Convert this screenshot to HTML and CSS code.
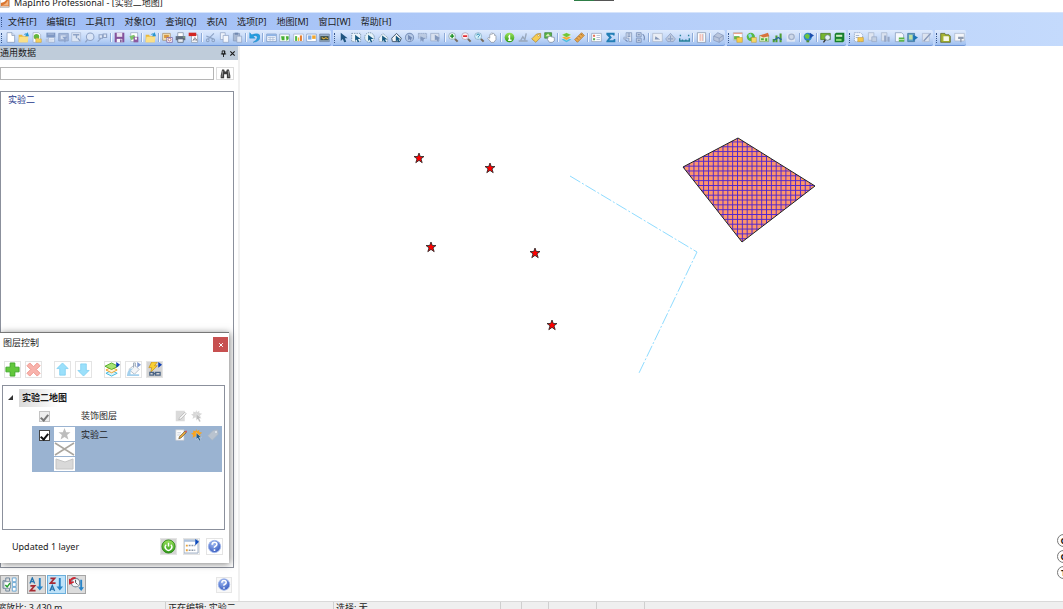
FILE: index.html
```html
<!DOCTYPE html>
<html lang="zh-CN">
<head>
    <meta charset="UTF-8">
    <meta name="viewport" content="width=device-width, initial-scale=1.0">
    <title>MapInfo Professional - [实验二地图]</title>
    <link rel="stylesheet" href="styles.css">
</head>
<body>

<!-- icon sprite -->
<svg class="sprite" aria-hidden="true">
    <defs>
        <linearGradient id="gGreen" x1="0" y1="0" x2="0" y2="1"><stop offset="0" stop-color="#9be25c"/><stop offset="1" stop-color="#2c9a17"/></linearGradient>
        <radialGradient id="gBlue" cx=".4" cy=".3" r=".8"><stop offset="0" stop-color="#9fb9f2"/><stop offset="1" stop-color="#2b50b8"/></radialGradient>
    </defs>
    <symbol id="i-page" viewBox="0 0 16 16"><path d="M3 1h7l4 4v10H3z" fill="#fff" stroke="#7d92b5"/><path d="M10 1v4h4" fill="#dde6f4" stroke="#7d92b5"/></symbol>
    <symbol id="i-folder" viewBox="0 0 16 16"><path d="M1 4h5l1 2h7v9H1z" fill="#e9b93c"/><path d="M1 15l1-8h13l-1 8z" fill="#fbe087"/><path d="M8 5q2-4 5-3l1-2 2 6h-6l2-2q-2-1-4 1" fill="#2795d0"/></symbol>
    <symbol id="i-copygreen" viewBox="0 0 16 16"><path d="M3 1h8l3 3v11H3z" fill="#fff" stroke="#9aa9c0"/><circle cx="8" cy="7" r="4" fill="#64b63c"/><path d="M7 9h3l1 1h4v5H7z" fill="#f4d25f" stroke="#c9a033" stroke-width=".7"/></symbol>
    <symbol id="i-dimsave" viewBox="0 0 16 16"><path d="M2 1h13v7H2z" fill="#7f98c4"/><path d="M5 8h9v7H5z" fill="#e1e8f3" stroke="#93a7ca"/><path d="M4 3h9M7 11h6M7 13h4" stroke="#c7d3e8"/><path d="M1 10h5v5H1z" fill="#b3c1da"/></symbol>
    <symbol id="i-dimtable" viewBox="0 0 16 16"><path d="M1 2h14v11H1z" fill="#a3b5d6" stroke="#7f97c2"/><path d="M4 5h7v5H4z" fill="#d5dfef"/><path d="M6 7h8l-3 3v5H9v-5z" fill="#8ba2cb"/></symbol>
    <symbol id="i-dimtext" viewBox="0 0 16 16"><path d="M1 1h13v13H1z" fill="#dbe4f3" stroke="#a3b5d3"/><path d="M3 4h9M8 5v4M10 9l3 4" stroke="#8da2c6" stroke-width="2"/></symbol>
    <symbol id="i-dimzoom" viewBox="0 0 16 16"><circle cx="9" cy="7" r="5.5" fill="#d9e4f6" stroke="#8ea2c5" stroke-width="1.5"/><path d="M5 11l-3 4" stroke="#8ea2c5" stroke-width="2"/></symbol>
    <symbol id="i-dimwand" viewBox="0 0 16 16"><path d="M1 14l5-5M3 4h5v5H3zM9 3h5v5H9z" stroke="#8ea2c5" stroke-width="1.6" fill="#dde6f5"/></symbol>
    <symbol id="i-save" viewBox="0 0 16 16"><path d="M1 1h14v14H1z" fill="#84529b"/><path d="M4 1h8v6H4z" fill="#e9e3f1"/><path d="M4 10h8v5H4z" fill="#f7f3fa"/><path d="M9 11h2v4H9z" fill="#684080"/></symbol>
    <symbol id="i-savecopy" viewBox="0 0 16 16"><path d="M4 1h10v13H4z" fill="#fff" stroke="#8fa2bd"/><path d="M2 6l7-2 2 4-6 4z" fill="#7fc46c"/><path d="M8 7h7v8H8z" fill="#8c5aa0"/><path d="M10 8h3v3h-3z" fill="#fff"/></symbol>
    <symbol id="i-printpage" viewBox="0 0 16 16"><path d="M1 2h11v10H1z" fill="#f8eac3" stroke="#9b8562"/><path d="M3 4h7v5H3z" fill="#d89741"/><path d="M7 8h8v7H7z" fill="#fff" stroke="#75559a"/><circle cx="11" cy="11" r="2" fill="none" stroke="#a34c4c"/></symbol>
    <symbol id="i-print" viewBox="0 0 16 16"><path d="M4 1h8v6H4z" fill="#fff" stroke="#76859d"/><path d="M1 6h14v6H1z" fill="#626e80"/><path d="M4 10h8v5H4z" fill="#e9edf4" stroke="#4b5665"/><path d="M12 7h2v1h-2z" fill="#9ee571"/></symbol>
    <symbol id="i-pdf" viewBox="0 0 16 16"><path d="M5 4h9v11H5z" fill="#fff" stroke="#8391a5"/><path d="M1 1h11v5H1z" fill="#d22621"/><path d="M7 13l3-5 3 4-5-1" fill="none" stroke="#5d5d6d"/></symbol>
    <symbol id="i-cut" viewBox="0 0 16 16"><path d="M13 2L5 10M2 6l10 4" stroke="#8da3c5" stroke-width="1.6"/><circle cx="4" cy="12" r="2" fill="none" stroke="#8da3c5" stroke-width="1.5"/><circle cx="12" cy="12" r="2" fill="none" stroke="#8da3c5" stroke-width="1.5"/></symbol>
    <symbol id="i-copy" viewBox="0 0 16 16"><path d="M2 1h7v10H2z" fill="#eef3fb" stroke="#8c9fc0"/><path d="M6 5h8v10H6z" fill="#f3f6fc" stroke="#8c9fc0"/></symbol>
    <symbol id="i-paste" viewBox="0 0 16 16"><path d="M2 2h9v11H2z" fill="#a8b8d2" stroke="#7f94b8"/><path d="M4 1h5v3H4z" fill="#7189b1"/><path d="M7 6h7v9H7z" fill="#dfe7f4" stroke="#8c9fc0"/></symbol>
    <symbol id="i-undo" viewBox="0 0 16 16"><path d="M1 1v8h8L6 6q6-2 6 2t-6 7q10-1 10-8T4 4z" fill="#269ee0" stroke="#1681c4" stroke-width=".6"/></symbol>
    <symbol id="i-win" viewBox="0 0 16 16"><path d="M1 3h14v11H1z" fill="#eef4fc" stroke="#6f8eb9"/><path d="M1 3h14v3H1z" fill="#8fb3e4"/><path d="M3 8h10M3 11h10M6 7v6M10 7v6" stroke="#a6b8d3"/></symbol>
    <symbol id="i-wingreen" viewBox="0 0 16 16"><path d="M1 3h14v11H1z" fill="#f6fbf6" stroke="#809abb"/><path d="M3 6h5v6H4zM10 6h4v4l-3 3z" fill="#46b034"/></symbol>
    <symbol id="i-winbar" viewBox="0 0 16 16"><path d="M1 3h14v11H1z" fill="#fff" stroke="#9cabc4"/><path d="M3 6h3v7H3z" fill="#51b749"/><path d="M7 8h2v5H7z" fill="#f2c12e"/><path d="M10 5h3v8h-3z" fill="#e27c30"/></symbol>
    <symbol id="i-winlay" viewBox="0 0 16 16"><path d="M1 3h14v11H1z" fill="#fff" stroke="#7795c0"/><path d="M3 5h5v6H3z" fill="#81ace3"/><path d="M9 5h5v5H9z" fill="#f0a62e"/></symbol>
    <symbol id="i-windark" viewBox="0 0 16 16"><path d="M1 3h14v11H1z" fill="#9bb0c8" stroke="#6a7e9c"/><path d="M2 6h12v6H2z" fill="#3a4c45"/><path d="M4 8l3 2 3-2 3 2" stroke="#e0ae3b" stroke-width="1.5" fill="none"/></symbol>
    <symbol id="i-arrow" viewBox="0 0 16 16"><path d="M4 1v12l3-3 2 5 3-1-2-5h4z" fill="#21557f"/></symbol>
    <symbol id="i-marquee" viewBox="0 0 16 16"><path d="M1 2h13v12H1z" fill="#eaf3fa" stroke="#5d7b95" stroke-dasharray="2 1.5"/><path d="M6 4v9l2-2 2 4 2-1-2-4h4z" fill="#17587f"/></symbol>
    <symbol id="i-radius" viewBox="0 0 16 16"><circle cx="8" cy="8" r="7" fill="#e6f3f8" stroke="#547692" stroke-dasharray="2 1.3"/><path d="M6 4v9l2-2 2 4 2-1-2-4h4z" fill="#17587f"/></symbol>
    <symbol id="i-poly" viewBox="0 0 16 16"><path d="M1 9l6-7 7 6v6H2z" fill="#e9f3f8" stroke="#738ba2" stroke-dasharray="2 1"/><path d="M6 5v9l2-2 2 3 2-1-2-3h4z" fill="#17587f"/></symbol>
    <symbol id="i-bound" viewBox="0 0 16 16"><path d="M1 9l7-7 7 7-2 5H2z" fill="#f2f4f5" stroke="#44576d" stroke-width="1.4"/><path d="M7 5v9l2-2 2 3 2-1-2-3h3z" fill="#17587f"/></symbol>
    <symbol id="i-dimcirc" viewBox="0 0 16 16"><circle cx="8" cy="8" r="6" fill="#b8cbe7" stroke="#7f97bf" stroke-width="1.5"/><path d="M6 4v8l2-2 2 3 1-4h2z" fill="#7189b4"/></symbol>
    <symbol id="i-dimsel" viewBox="0 0 16 16"><path d="M2 2h12v7H2z" fill="#bccbe2" stroke="#8197bb" stroke-dasharray="2 1"/><path d="M5 6v8l2-2 2 3 1-5h3z" fill="#8298bd"/></symbol>
    <symbol id="i-dimpick" viewBox="0 0 16 16"><path d="M1 2h12v11H1z" fill="#d8e0ee" stroke="#96a7c4"/><path d="M7 4v8l2-1 3 4 1-6h2z" fill="#8298bd"/></symbol>
    <symbol id="i-zoomin" viewBox="0 0 16 16"><path d="M10 10l4 4" stroke="#776c5e" stroke-width="3"/><circle cx="6" cy="6" r="5" fill="#ebf8f0" stroke="#849bb0"/><path d="M3 6h6M6 3v6" stroke="#148b1c" stroke-width="2"/></symbol>
    <symbol id="i-zoomout" viewBox="0 0 16 16"><path d="M10 10l4 4" stroke="#776c5e" stroke-width="3"/><circle cx="6" cy="6" r="5" fill="#fbf0f2" stroke="#9d9bb0"/><path d="M3 6h6" stroke="#df2029" stroke-width="2.4"/></symbol>
    <symbol id="i-zoomq" viewBox="0 0 16 16"><path d="M10 10l4 4" stroke="#776c5e" stroke-width="3"/><circle cx="6" cy="6" r="5" fill="#d7f1fb" stroke="#7ca2bd"/><path d="M4 5q0-2 2-2t2 2l-2 2M6 8v1" fill="none" stroke="#2385ae" stroke-width="1.4"/></symbol>
    <symbol id="i-hand" viewBox="0 0 16 16"><path d="M4 9V4q1-2 2 0V2q1-2 2 0v1q2-2 3 0v2q2-1 2 1v5l-3 4H6L1 9q1-2 3 0z" fill="#fff" stroke="#7c8490" stroke-width=".9"/></symbol>
    <symbol id="i-info" viewBox="0 0 16 16"><circle cx="8" cy="8" r="7" fill="url(#gGreen)"/><path d="M8 4v2M6 7h2v5M6 12h5" stroke="#fff" stroke-width="2" fill="none"/></symbol>
    <symbol id="i-dimhot" viewBox="0 0 16 16"><path d="M1 13h13M4 12l3-5 3 4 2-9" fill="none" stroke="#98a7bb" stroke-width="2"/></symbol>
    <symbol id="i-tag" viewBox="0 0 16 16"><path d="M1 10l7-7 6-1v6l-7 7z" fill="#f6cc52" stroke="#a78333"/><circle cx="11" cy="5" r="1.3" fill="#fff" stroke="#8b6a1f" stroke-width=".6"/></symbol>
    <symbol id="i-drag" viewBox="0 0 16 16"><path d="M1 1h10v8H1z" fill="#5bb446" stroke="#3b7e3c"/><path d="M2 6l4-4 3 4" fill="#d8eeb6"/><path d="M6 7q3-2 5 0l4 1v5l-3 2H8l-3-4z" fill="#fff" stroke="#788594"/></symbol>
    <symbol id="i-layers" viewBox="0 0 16 16"><path d="M1 11l7-3 7 3-7 4z" fill="#4bbde2"/><path d="M1 8l7-3 7 3-7 4z" fill="#f5a834" stroke="#fff" stroke-width=".5"/><path d="M1 4l7-3 7 3-7 4z" fill="#6fc63a" stroke="#fff" stroke-width=".5"/></symbol>
    <symbol id="i-ruler" viewBox="0 0 16 16"><path d="M1 11L11 1l4 4L5 15z" fill="#e9a84e" stroke="#a76a20"/><path d="M4 9l2 2M7 6l2 2M10 3l2 2" stroke="#7d4d14"/></symbol>
    <symbol id="i-legend" viewBox="0 0 16 16"><path d="M1 2h14v12H1z" fill="#fff" stroke="#8c9bb3"/><path d="M3 4h3v3H3z" fill="#e37259"/><path d="M3 9h3v3H3z" fill="#58ac51"/><path d="M8 5h5M8 8h5M8 11h5" stroke="#91a4c0"/></symbol>
    <symbol id="i-sigma" viewBox="0 0 16 16"><path d="M2 1h12v4h-2l-1-1H7l3 4-4 4h6l1-2h2v5H2v-2l4-5-4-4z" fill="#247fb6"/></symbol>
    <symbol id="i-dimdist" viewBox="0 0 16 16"><path d="M6 1h8v13h-4V9H6z" fill="#dce4f2" stroke="#768cb3"/><path d="M8 3h4M8 6h4M2 9l6 5" stroke="#6e85b0" stroke-width="1.5"/><circle cx="4" cy="9" r="2.5" fill="#a9bad8"/></symbol>
    <symbol id="i-dimdist2" viewBox="0 0 16 16"><path d="M2 1h7v6H2zM2 9h7v6H2z" fill="#c3d0e5" stroke="#6e85b0"/><path d="M11 3q4 3 2 9M4 4h3M4 12h3" fill="none" stroke="#6e85b0" stroke-width="1.5"/></symbol>
    <symbol id="i-dimclip" viewBox="0 0 16 16"><path d="M1 2h14v12H1z" fill="#e9edf5" stroke="#a8b3c7"/><path d="M4 11l1-5 4 3 3 2z" fill="#8497b8"/></symbol>
    <symbol id="i-dimclub" viewBox="0 0 16 16"><path d="M1 10l7-8 7 8-3 4H4z" fill="#c2cde0" stroke="#8195b9"/><path d="M8 5v8M4 10h8" stroke="#8fa2c4" stroke-width="1.5"/></symbol>
    <symbol id="i-scale" viewBox="0 0 16 16"><path d="M1 9v4h14V9M5 11v2M10 11v2" fill="none" stroke="#28819a" stroke-width="2"/><path d="M1 5h2M13 5h2" stroke="#28819a" stroke-width="2"/></symbol>
    <symbol id="i-mapcad" viewBox="0 0 16 16"><path d="M2 1h12v14H2z" fill="#fff" stroke="#7e8ca5"/><path d="M6 3v10M9 3v10" stroke="#d77464"/><path d="M11 3v10" stroke="#b3c8e0"/></symbol>
    <symbol id="i-dimcube" viewBox="0 0 16 16"><path d="M1 6l6-5 8 4v6l-6 4-8-3z" fill="#b9c5dc" stroke="#8093b7"/><path d="M1 6l8 3 6-4M9 9v6" fill="none" stroke="#8093b7"/></symbol>
    <symbol id="i-tablegold" viewBox="0 0 16 16"><path d="M2 1h13v11H2z" fill="#fff" stroke="#9daabd"/><path d="M2 1h13v2H2z" fill="#e8a58f"/><path d="M3 6h8v5H3z" fill="#65b64a"/><path d="M7 8h8v7H7z" fill="#f7ce4a" stroke="#bd9029" stroke-width=".7"/></symbol>
    <symbol id="i-globegold" viewBox="0 0 16 16"><circle cx="7" cy="7" r="6" fill="#54b946"/><path d="M3 4l4-2 2 4-4 3z" fill="#8cd6ef"/><path d="M8 8h7v7H8z" fill="#f7d869" stroke="#bd9029" stroke-width=".7"/></symbol>
    <symbol id="i-mapred" viewBox="0 0 16 16"><path d="M1 5h13v9H1z" fill="#e4eec7" stroke="#79a361"/><path d="M1 5l12-4 2 5-9 2z" fill="#d8733c"/><path d="M3 9h4v3H3zM9 9h3v4H9z" fill="#4fae3d"/></symbol>
    <symbol id="i-bars" viewBox="0 0 16 16"><path d="M1 10h3v5H1zM5 5h3v10H5zM11 2h3v13h-3z" fill="#4c9d31"/><path d="M3 12l6-4 5 3" fill="none" stroke="#26649b" stroke-width="2"/></symbol>
    <symbol id="i-dimgear" viewBox="0 0 16 16"><path d="M1 2h12v12H1z" fill="#e2e9f4"/><circle cx="8" cy="7" r="4" fill="#cdd7e8" stroke="#a3b2cc" stroke-width="2"/></symbol>
    <symbol id="i-globearrow" viewBox="0 0 16 16"><circle cx="7" cy="7" r="6" fill="#2c84c8"/><path d="M2 5l4-3 4 3-2 5-4-1z" fill="#6cc541"/><path d="M10 1l6 4-6 4z" fill="#1b4dad"/><path d="M5 12h4v3H5z" fill="#4f8a34"/></symbol>
    <symbol id="i-findgreen" viewBox="0 0 16 16"><path d="M1 2h14v9H1z" fill="#76b62e" stroke="#41751c"/><path d="M8 11l-3 4" stroke="#333" stroke-width="2"/><circle cx="11" cy="8" r="4" fill="#e4f2f7" stroke="#556b73"/></symbol>
    <symbol id="i-calc" viewBox="0 0 16 16"><path d="M1 3l2-2h12v12l-2 2H1z" fill="#187f2d"/><path d="M3 4h9v3H3z" fill="#cdeec0"/><path d="M3 10h8v3H3z" fill="#8bdb77"/></symbol>
    <symbol id="i-pagelock" viewBox="0 0 16 16"><path d="M2 1h9l3 3v10H2z" fill="#f5f8fd" stroke="#7e93b5" stroke-dasharray="2 1"/><path d="M7 8h8v6H7z" fill="#f4c84b" stroke="#b6892a" stroke-width=".7"/><path d="M4 5h5M4 8h3" stroke="#7e93b5"/></symbol>
    <symbol id="i-dimpage" viewBox="0 0 16 16"><path d="M2 1h8v11H2z" fill="#dfe5f0" stroke="#a5b3ca"/><path d="M7 7h7v7H7z" fill="#c3cfe1" stroke="#95a6c3"/></symbol>
    <symbol id="i-dimpages" viewBox="0 0 16 16"><path d="M2 1h8v12H2z" fill="#d9e1ee" stroke="#a5b3ca"/><path d="M6 5h3v9H6zM11 7h3v7h-3z" fill="#96a7c6"/></symbol>
    <symbol id="i-pagegreen" viewBox="0 0 16 16"><path d="M2 1h9l3 3v10H2z" fill="#f5f8fd" stroke="#7e93b5"/><path d="M7 8h8v6H7z" fill="#57b546"/><path d="M7 11h8" stroke="#e6f8df"/></symbol>
    <symbol id="i-pagearrow" viewBox="0 0 16 16"><path d="M1 2h10v12H1z" fill="#609ec2" stroke="#366f98"/><path d="M3 4h5v7H3z" fill="#bfe0a0"/><path d="M9 4l7 4-7 5z" fill="#1b73b5"/></symbol>
    <symbol id="i-dimpen" viewBox="0 0 16 16"><path d="M2 2h10v12H2z" fill="#dce3ef" stroke="#a7b5cc"/><path d="M14 2L4 13" stroke="#8698b9" stroke-width="2"/></symbol>
    <symbol id="i-olive" viewBox="0 0 16 16"><path d="M1 2h6l1 2h5l2 2v9H1z" fill="#a6b433" stroke="#4d5a1a"/><path d="M5 6h7l1 1v6H5z" fill="#f7f8e6"/></symbol>
    <symbol id="i-winfunnel" viewBox="0 0 16 16"><path d="M1 2h14v11H1z" fill="#f4f6fa" stroke="#a8b5c9"/><path d="M6 7h8v3H6zM9 10h2v5H9z" fill="#8e9bb0"/></symbol>

    <symbol id="i-binoculars" viewBox="0 0 16 16"><path d="M3 2h3l1 3h2l1-3h3l2 9v4h-5V9H6v6H1v-4z" fill="#3d3d3d"/><path d="M4 4l-1 9M12 4l1 9" stroke="#bbb"/></symbol>
    <symbol id="i-pin" viewBox="0 0 8 8"><path d="M2.5 1h3v3.500h-3zM1 4.500h6M4 4.500V8" fill="none" stroke="#111"/><path d="M4.500 1h1v3h-1z" fill="#111"/></symbol>
    <symbol id="i-close" viewBox="0 0 8 8"><path d="M1.500 1.500l5 5M6.500 1.500l-5 5" stroke="currentColor" stroke-width="1.300"/></symbol>
    <symbol id="i-plus" viewBox="0 0 16 16"><path d="M5.500 1h5v4.500H15v5h-4.500V15h-5v-4.500H1v-5h4.500z" fill="#63c83c" stroke="#3fa828"/></symbol>
    <symbol id="i-remove" viewBox="0 0 16 16"><path d="M4 1l4 4 4-4 3 3-4 4 4 4-3 3-4-4-4 4-3-3 4-4-4-4z" fill="#f8b3ac" stroke="#ee948b"/></symbol>
    <symbol id="i-up" viewBox="0 0 16 16"><path d="M8 1l6 6h-3v7H5V7H2z" fill="#9be0fb" stroke="#7bcdf0" stroke-width=".8"/></symbol>
    <symbol id="i-down" viewBox="0 0 16 16"><path d="M8 15L2 9h3V2h6v7h3z" fill="#9be0fb" stroke="#7bcdf0" stroke-width=".8"/></symbol>
    <symbol id="i-layerlist" viewBox="0 0 16 16"><path d="M1 12l6-3 6 3-6 3z" fill="#d9f3fb" stroke="#42b8dc"/><path d="M1 8.500l6-3 6 3-6 3z" fill="#fff2d8" stroke="#efa01f"/><path d="M0 4.500L7 1l7 3.500L7 8z" fill="#a8e374" stroke="#55ab2a"/><path d="M12 0l4 3-4 3z" fill="#0e3fb5"/></symbol>
    <symbol id="i-paint" viewBox="0 0 16 16"><path d="M3 8l6-5 5 5-5 5z" fill="#f3f5f7" stroke="#b3bec9"/><path d="M1 14q1-8 7-7q-4 2-3 6h9v2H1z" fill="#a4d0ed"/><path d="M8 6V1h2v4" fill="none" stroke="#9aa9b8"/><path d="M12 0l4 3-4 3z" fill="#7b97cf"/></symbol>
    <symbol id="i-bolt" viewBox="0 0 16 16"><path d="M5 0h6L8 4h3l-7 7 1-5H2z" fill="#f9cf33" stroke="#c18a14" stroke-width=".7"/><path d="M3 11h4v3H3zM9 11h5v3H9zM6 12.500h4" fill="none" stroke="#4a6485" stroke-width="1.300"/><path d="M12 0l4 3-4 3z" fill="#0e3fb5"/></symbol>
    <symbol id="i-edit" viewBox="0 0 16 16"><path d="M1 1h11v14H1z" fill="#fdfdfd" stroke="#bcc4cc"/><path d="M3 5h5M3 8h4" stroke="#b7c2cd"/><path d="M5 13l1-3 7-7 2 2-7 7z" fill="#e8a83c" stroke="#56503c" stroke-width=".8"/><path d="M13 3l2 2 1-2-1-1z" fill="#d64f4f"/></symbol>
    <symbol id="i-editdim" viewBox="0 0 16 16"><path d="M1 1h12v14H1z" fill="#dadada"/><path d="M5 13l1-3 7-7 2 2-7 7z" fill="#f2f2f2" stroke="#b5b5b5"/></symbol>
    <symbol id="i-select" viewBox="0 0 16 16"><path d="M7 0l1 3 3-2v3l4 1-3 2 1 3H5l-3 2 1-4-3-2 3-1V2l3 1z" fill="#f8a41f"/><path d="M7 5v9l2-2 2 4 2-1-2-4h3z" fill="#235b87" stroke="#fff" stroke-width=".5"/></symbol>
    <symbol id="i-selectdim" viewBox="0 0 16 16"><path d="M7 0l1 3 3-2v3l4 1-3 2 1 3H5l-3 2 1-4-3-2 3-1V2l3 1z" fill="#d8d8d8"/><path d="M7 5v9l2-2 2 4 2-1-2-4h3z" fill="#bcbcbc" stroke="#fff" stroke-width=".5"/></symbol>
    <symbol id="i-tagdim" viewBox="0 0 16 16"><path d="M1 9l7-7 6-1 1 6-8 8z" fill="#b9c3cf" stroke="#aab5c4"/><circle cx="12" cy="4" r="1.300" fill="#e6ebf1"/></symbol>
    <symbol id="i-power" viewBox="0 0 16 16"><circle cx="8" cy="8" r="7" fill="url(#gGreen)" stroke="#318b1b"/><path d="M5.500 6a3.500 3.500 0 1 0 5 0M8 4v4" fill="none" stroke="#fff" stroke-width="1.500"/></symbol>
    <symbol id="i-options" viewBox="0 0 16 16"><path d="M0 1h15v14H0z" fill="#fff" stroke="#93a5bc"/><path d="M0 1h12v2H0z" fill="#aec3de"/><path d="M2 7h2M2 12h2" stroke="#e8a33b" stroke-width="2"/><path d="M5 7h7M5 12h7" stroke="#8a97a9" stroke-width="1.500" stroke-dasharray="2 1"/><path d="M12 0l4 3-4 4z" fill="#0e4bbd"/></symbol>
    <symbol id="i-help" viewBox="0 0 16 16"><circle cx="8" cy="8" r="6.500" fill="url(#gBlue)" stroke="#9db3ea"/><path d="M5.500 6q0-2.500 2.500-2.500t2.500 2.200q0 1.300-1.500 2T8 9.500M8 11v1.800" fill="none" stroke="#fff" stroke-width="1.700"/></symbol>
    <symbol id="i-tree" viewBox="0 0 16 16"><path d="M4 1h4v3M4 1v14h4v-3M4 4H1v8h3" fill="none" stroke="#70869a"/><path d="M2 5h7v7H2z" fill="#fff" stroke="#7f94a6"/><path d="M3.500 8.500l2 2 3-4" fill="none" stroke="#26a030" stroke-width="1.600"/><path d="M11 1h4v4h-4zM11 6h4v4h-4zM11 11h4v4h-4z" fill="#fff" stroke="#67a6d4"/></symbol>
    <symbol id="i-az" viewBox="0 0 16 16"><path d="M1 7l2.500-6L6 7M2 5h3" fill="none" stroke="#2272ad" stroke-width="1.400"/><path d="M1.500 9.500h4.500L1.500 14.500H7" fill="none" stroke="#a82a32" stroke-width="1.700"/><path d="M10.500 1h2v9H15l-3.500 4.500L8 10h2.500z" fill="#2784c8"/></symbol>
    <symbol id="i-za" viewBox="0 0 16 16"><path d="M1.500 1.500h4.500L1.500 6.500H7" fill="none" stroke="#a82a32" stroke-width="1.700"/><path d="M1 15l2.500-6L6 15M2 13h3" fill="none" stroke="#2272ad" stroke-width="1.400"/><path d="M10.500 1h2v9H15l-3.500 4.500L8 10h2.500z" fill="#2784c8"/></symbol>
    <symbol id="i-recent" viewBox="0 0 16 16"><circle cx="7" cy="6" r="4.500" fill="#f5f8fb" stroke="#7e8c99" stroke-width="1.300"/><path d="M1 6q0-5 6-5M0 2l1 5 4-2" fill="none" stroke="#cf2430" stroke-width="1.800"/><path d="M7 3v3l2 2" fill="none" stroke="#444"/><path d="M12 3h2v8h2l-3 4-3-4h2z" fill="#2784c8"/></symbol>
</svg>

<header class="titlebar">
    <svg class="logo" viewBox="0 0 12 12" aria-hidden="true"><path d="M0 0h11v11H0z" fill="#fff" stroke="#9a9a9a"/><path d="M1 10V6q5 0 8-6h2v10z" fill="#d9752f"/><path d="M2 9q5-1 8-7v7z" fill="#f3b583"/></svg>
    <span>MapInfo Professional - [实验二地图]</span>
</header>
<div class="overlay-tab"></div>

<div class="bars">
    <nav class="menubar" aria-label="菜单">
        <span class="grip"></span>
        <button>文件[F]</button>
        <button>编辑[E]</button>
        <button>工具[T]</button>
        <button>对象[O]</button>
        <button>查询[Q]</button>
        <button>表[A]</button>
        <button>选项[P]</button>
        <button>地图[M]</button>
        <button>窗口[W]</button>
        <button>帮助[H]</button>
    </nav>

    <div class="toolbars">
        <div class="toolbar standard">
            <span class="grip"></span>
            <button aria-label="新建"><svg><use href="#i-page"/></svg></button>
            <button aria-label="打开"><svg><use href="#i-folder"/></svg></button>
            <button aria-label="打开通用数据"><svg><use href="#i-copygreen"/></svg></button>
            <button aria-label="打开DBMS"><svg><use href="#i-dimsave"/></svg></button>
            <button aria-label="刷新表"><svg><use href="#i-dimtable"/></svg></button>
            <button aria-label="解除链接"><svg><use href="#i-dimtext"/></svg></button>
            <button aria-label="查找"><svg><use href="#i-dimzoom"/></svg></button>
            <button aria-label="查找选择"><svg><use href="#i-dimwand"/></svg></button>
            <i></i>
            <button aria-label="保存表"><svg><use href="#i-save"/></svg></button>
            <button aria-label="另存副本"><svg><use href="#i-savecopy"/></svg></button>
            <i></i>
            <button aria-label="打开工作空间"><svg><use href="#i-folder"/></svg></button>
            <i></i>
            <button aria-label="保存工作空间"><svg><use href="#i-printpage"/></svg></button>
            <button aria-label="打印"><svg><use href="#i-print"/></svg></button>
            <button aria-label="打印PDF"><svg><use href="#i-pdf"/></svg></button>
            <i></i>
            <button aria-label="剪切"><svg><use href="#i-cut"/></svg></button>
            <button aria-label="复制"><svg><use href="#i-copy"/></svg></button>
            <button aria-label="粘贴"><svg><use href="#i-paste"/></svg></button>
            <i></i>
            <button aria-label="撤消"><svg><use href="#i-undo"/></svg></button>
            <i></i>
            <button aria-label="新建浏览窗口"><svg><use href="#i-win"/></svg></button>
            <button aria-label="新建地图窗口"><svg><use href="#i-wingreen"/></svg></button>
            <button aria-label="新建统计图窗口"><svg><use href="#i-winbar"/></svg></button>
            <button aria-label="新建布局窗口"><svg><use href="#i-winlay"/></svg></button>
            <button aria-label="重新分区窗口"><svg><use href="#i-windark"/></svg></button>
        </div>
        <div class="toolbar main-tools">
            <span class="grip"></span>
            <button aria-label="选择"><svg><use href="#i-arrow"/></svg></button>
            <button aria-label="矩形选择"><svg><use href="#i-marquee"/></svg></button>
            <button aria-label="半径选择"><svg><use href="#i-radius"/></svg></button>
            <button aria-label="多边形选择"><svg><use href="#i-poly"/></svg></button>
            <button aria-label="边界选择"><svg><use href="#i-bound"/></svg></button>
            <button aria-label="撤消选择"><svg><use href="#i-dimcirc"/></svg></button>
            <button aria-label="反转选择"><svg><use href="#i-dimsel"/></svg></button>
            <button aria-label="图形选择"><svg><use href="#i-dimpick"/></svg></button>
            <i></i>
            <button aria-label="放大"><svg><use href="#i-zoomin"/></svg></button>
            <button aria-label="缩小"><svg><use href="#i-zoomout"/></svg></button>
            <button aria-label="改变视图"><svg><use href="#i-zoomq"/></svg></button>
            <button aria-label="平移"><svg><use href="#i-hand"/></svg></button>
            <i></i>
            <button aria-label="信息"><svg><use href="#i-info"/></svg></button>
            <button aria-label="热链接"><svg><use href="#i-dimhot"/></svg></button>
            <button aria-label="标注"><svg><use href="#i-tag"/></svg></button>
            <button aria-label="拖动地图窗口"><svg><use href="#i-drag"/></svg></button>
            <i></i>
            <button aria-label="图层控制"><svg><use href="#i-layers"/></svg></button>
            <button aria-label="标尺"><svg><use href="#i-ruler"/></svg></button>
            <i></i>
            <button aria-label="显示图例"><svg><use href="#i-legend"/></svg></button>
            <button aria-label="统计"><svg><use href="#i-sigma"/></svg></button>
            <i></i>
            <button aria-label="设置目标地域"><svg><use href="#i-dimdist"/></svg></button>
            <button aria-label="分配选择对象"><svg><use href="#i-dimdist2"/></svg></button>
            <i></i>
            <button aria-label="剪裁区"><svg><use href="#i-dimclip"/></svg></button>
            <button aria-label="设置剪裁区"><svg><use href="#i-dimclub"/></svg></button>
            <button aria-label="比例尺"><svg><use href="#i-scale"/></svg></button>
            <i></i>
            <button aria-label="目录"><svg><use href="#i-mapcad"/></svg></button>
            <i></i>
            <button aria-label="三维"><svg><use href="#i-dimcube"/></svg></button>
        </div>
        <div class="toolbar web">
            <span class="grip"></span>
            <button aria-label="打开网络表"><svg><use href="#i-tablegold"/></svg></button>
            <button aria-label="打开WMS"><svg><use href="#i-globegold"/></svg></button>
            <button aria-label="打开WFS"><svg><use href="#i-mapred"/></svg></button>
            <button aria-label="地理编码"><svg><use href="#i-bars"/></svg></button>
            <button aria-label="设置"><svg><use href="#i-dimgear"/></svg></button>
            <i></i>
            <button aria-label="行车区域"><svg><use href="#i-globearrow"/></svg></button>
            <i></i>
            <button aria-label="查找地图"><svg><use href="#i-findgreen"/></svg></button>
            <button aria-label="目录浏览"><svg><use href="#i-calc"/></svg></button>
        </div>
        <div class="toolbar dbms">
            <span class="grip"></span>
            <button aria-label="打开DBMS表"><svg><use href="#i-pagelock"/></svg></button>
            <button aria-label="刷新DBMS表"><svg><use href="#i-dimpage"/></svg></button>
            <button aria-label="解除DBMS链接"><svg><use href="#i-dimpages"/></svg></button>
            <button aria-label="使表可映射"><svg><use href="#i-pagegreen"/></svg></button>
            <button aria-label="改变符号"><svg><use href="#i-pagearrow"/></svg></button>
            <button aria-label="断开"><svg><use href="#i-dimpen"/></svg></button>
        </div>
        <div class="toolbar extras">
            <span class="grip"></span>
            <button aria-label="运行程序"><svg><use href="#i-olive"/></svg></button>
            <button aria-label="显示窗口"><svg><use href="#i-winfunnel"/></svg></button>
        </div>
    </div>
</div>

<main class="workspace">
    <aside class="sidebar">
        <div class="sidebar-head">
            <h2>通用数据</h2>
            <button aria-label="固定"><svg><use href="#i-pin"/></svg></button>
            <button aria-label="关闭"><svg><use href="#i-close"/></svg></button>
        </div>
        <form class="search">
            <input type="text" aria-label="搜索">
            <button type="button" aria-label="查找"><svg><use href="#i-binoculars"/></svg></button>
        </form>
        <ul class="tables">
            <li><a href="#">实验二</a></li>
        </ul>
        <div class="sort-tools">
            <button aria-label="显示选项"><svg><use href="#i-tree"/></svg></button>
            <span class="space"></span>
            <button aria-label="升序"><svg><use href="#i-az"/></svg></button>
            <button class="active" aria-label="降序"><svg><use href="#i-za"/></svg></button>
            <button aria-label="最近"><svg><use href="#i-recent"/></svg></button>
            <button class="help" aria-label="帮助"><svg><use href="#i-help"/></svg></button>
        </div>
    </aside>

    <section class="map" aria-label="地图">
        <svg>
            <defs>
                <pattern id="hatch" x="497" y="139" width="4.84" height="4.84" patternUnits="userSpaceOnUse">
                    <path d="M0 0h5v5H0z" fill="#ff966b"/>
                    <path d="M0 .5h5M.5 0v5" stroke="#3414e0" stroke-opacity=".85"/>
                </pattern>
                <path id="star" d="M0-5L1.300-1.500H5L2 .8 3.200 4.700 0 2.400-3.200 4.700-2 .8-5-1.500H-1.300z" fill="#f00" stroke="#222" stroke-width=".8"/>
            </defs>
            <use href="#star" x="179" y="112"/>
            <use href="#star" x="250" y="122"/>
            <use href="#star" x="191" y="201"/>
            <use href="#star" x="295" y="207"/>
            <use href="#star" x="312" y="279"/>
            <path d="M330 130L457 206 399 327" fill="none" stroke="#8fdcff" stroke-dasharray="12 2 2 2"/>
            <path d="M443 121L498 92 575 140 502 196z" fill="url(#hatch)" stroke="#222"/>
        </svg>
    </section>
</main>

<section class="layers" aria-label="图层控制">
    <div class="layers-head">
        <h2>图层控制</h2>
        <button class="close" aria-label="关闭"><svg><use href="#i-close"/></svg></button>
    </div>
    <div class="layer-tools">
        <button aria-label="添加图层"><svg><use href="#i-plus"/></svg></button>
        <button aria-label="移除图层"><svg><use href="#i-remove"/></svg></button>
        <span class="space"></span>
        <button aria-label="上移"><svg><use href="#i-up"/></svg></button>
        <button aria-label="下移"><svg><use href="#i-down"/></svg></button>
        <span class="space"></span>
        <button aria-label="图层属性"><svg><use href="#i-layerlist"/></svg></button>
        <button aria-label="样式"><svg><use href="#i-paint"/></svg></button>
        <button class="pressed" aria-label="热链接选项"><svg><use href="#i-bolt"/></svg></button>
    </div>
    <div class="tree">
        <div class="root"><span class="twisty"></span><strong>实验二地图</strong></div>
        <div class="layer">
            <input type="checkbox" id="cosmetic" checked disabled>
            <span class="thumbs"></span>
            <label for="cosmetic">装饰图层</label>
            <svg><use href="#i-editdim"/></svg>
            <svg><use href="#i-selectdim"/></svg>
            <span class="slot"></span>
        </div>
        <div class="layer selected">
            <input type="checkbox" id="layer2" checked>
            <span class="thumbs">
                <svg viewBox="0 0 21 14"><path d="M10.500 1l1.700 4.300h4.300l-3.400 2.700 1.300 4.500-3.900-2.600-3.900 2.600 1.300-4.500L4.500 5.300h4.300z" fill="#bdbdbd"/></svg>
                <svg viewBox="0 0 21 14"><path d="M1 1l19 12M1 13L20 1" stroke="#aaa69f" stroke-width="1.500"/></svg>
                <svg viewBox="0 0 21 14"><path d="M2 2l9 3 8-3v10H2z" fill="#d9d9d9" stroke="#c4c4c4"/></svg>
            </span>
            <label for="layer2">实验二</label>
            <svg><use href="#i-edit"/></svg>
            <svg><use href="#i-select"/></svg>
            <svg><use href="#i-tagdim"/></svg>
        </div>
    </div>
    <div class="layers-foot">
        <p>Updated 1 layer</p>
        <button class="pressed" aria-label="自动刷新"><svg><use href="#i-power"/></svg></button>
        <button aria-label="选项"><svg><use href="#i-options"/></svg></button>
        <button aria-label="帮助"><svg><use href="#i-help"/></svg></button>
    </div>
</section>

<div class="float-keys">
    <button>C</button>
    <button>C</button>
    <button>T</button>
</div>

<footer class="statusbar">
    <span class="zoom">缩放比: 3.430 m</span>
    <span class="editing">正在编辑: 实验二</span>
    <span class="selecting">选择: 无</span>
    <span class="c1"></span>
    <span class="c2"></span>
    <span class="c3"></span>
    <span class="c4"></span>
</footer>

</body>
</html>
```
FILE: styles.css
```css
* {
    box-sizing: border-box;
}
body {
    margin: 0;
    height: 100vh;
    display: flex;
    flex-direction: column;
    overflow: hidden;
    position: relative;
    background: #fff;
    color: #1a1a1a;
    font-family: "Noto Sans", "Noto Sans CJK SC", sans-serif;
    font-size: 9px;
    line-height: 12px;
}
button {
    margin: 0;
    padding: 0;
    border: none;
    background: none;
    color: inherit;
    font: inherit;
    display: flex;
    align-items: center;
    justify-content: center;
}
h2, p, ul {
    margin: 0;
    padding: 0;
    font-size: 9px;
    font-weight: normal;
}
svg {
    display: block;
}
.sprite {
    position: absolute;
    width: 0;
    height: 0;
}

/* title */
.titlebar {
    height: 12px;
    padding-bottom: 3px;
    display: flex;
    align-items: flex-end;
    gap: 4px;
    overflow: hidden;
    flex: none;
}
.logo {
    width: 10px;
    height: 12px;
    flex: none;
}
.overlay-tab {
    position: absolute;
    top: 0;
    left: 54%;
    width: 40px;
    height: 1px;
    background: linear-gradient(90deg, #2e7d46 50%, #555 50%);
}

/* menu and toolbars */
.bars {
    flex: none;
    border-top: 1px solid #d6e4fb;
    background: linear-gradient(90deg, #9ebcf5, #c4dafc);
}
.menubar {
    height: 17px;
    display: flex;
    align-items: center;
    gap: 10px;
}
.menubar .grip {
    margin-right: -6px;
}
.grip {
    flex: none;
    width: 3px;
    height: 10px;
    border-left: 1px dotted #39588f;
    margin-left: 1px;
}
.toolbars {
    display: flex;
    gap: 2px;
}
.toolbar {
    height: 16px;
    display: flex;
    align-items: center;
    background: linear-gradient(#deeafd, #c3d8f8 55%, #9fbfef);
    border-bottom: 1px solid #6e96d8;
    border-radius: 0 2px 2px 0;
}
.toolbar button {
    flex: 1;
    min-width: 0;
}
.toolbar svg {
    width: 11px;
    height: 11px;
}
.toolbar i {
    width: 4px;
    height: 9px;
    background: linear-gradient(90deg, transparent 1px, #8eabd9 1px, #8eabd9 2px, #f1f6fe 2px, #f1f6fe 3px, transparent 3px);
}
.standard { width: 331px; }
.main-tools { width: 392px; }
.web { width: 119px; }
.dbms { width: 85px; }
.extras { width: 31px; }

/* left panel */
.workspace {
    flex: 1;
    min-height: 0;
    display: flex;
}
.sidebar {
    width: 240px;
    border-right: 2px solid #f0f0f0;
    display: flex;
    flex-direction: column;
}
.sidebar-head {
    height: 14px;
    display: flex;
    align-items: center;
    background: #bfccda;
    padding-right: 1px;
}
.sidebar-head h2 {
    flex: 1;
}
.sidebar-head button {
    width: 9px;
}
.sidebar-head svg {
    width: 7px;
    height: 7px;
}
.search {
    display: flex;
    gap: 2px;
    margin: 7px 4px 11px 0;
}
.search input {
    flex: 1;
    min-width: 0;
    height: 13px;
    padding: 0 2px;
    border: 1px solid #b5b5b5;
    font: inherit;
}
.search button {
    width: 18px;
    height: 13px;
    border: 1px solid #dcdcdc;
}
.search svg {
    width: 11px;
    height: 11px;
}
.tables {
    flex: 1;
    margin: 0 4px 0 0;
    padding: 2px 7px;
    border: 1px solid #8b909c;
    list-style: none;
}
.tables a {
    color: #24388c;
    text-decoration: none;
}
.sort-tools {
    display: flex;
    align-items: center;
    gap: 1px;
    padding: 7px 6px 7px 0;
}
.sort-tools button {
    width: 19px;
    height: 19px;
    border: 1px solid #a5a5a5;
    background: #dcdcdc;
}
.sort-tools svg {
    width: 15px;
    height: 15px;
}
.sort-tools .space {
    width: 6px;
}
.sort-tools .active {
    background: #bfe2f8;
    border-color: #6bafdc;
}
.sort-tools .help {
    width: 16px;
    height: 16px;
    margin-left: auto;
    background: #f8f8f8;
    border-color: #e6e6e6;
}

/* map */
.map {
    flex: 1;
    min-width: 0;
}
.map svg {
    width: 100%;
    height: 100%;
}

/* layer control window */
.layers {
    position: absolute;
    left: 0;
    bottom: 46px;
    width: 229px;
    padding: 4px 4px 7px 2px;
    background: #fff;
    border-top: 1px solid #777;
    box-shadow: 1px 1px 7px rgba(0, 0, 0, 0.5);
}
.layers-head {
    display: flex;
    justify-content: space-between;
    margin-right: -3px;
    padding-left: 1px;
}
.close {
    width: 15px;
    height: 15px;
    background: #c75050;
    color: #fff;
}
.close svg {
    width: 6px;
    height: 6px;
}
.layer-tools {
    display: flex;
    gap: 4px;
    padding: 9px 0 7px 2px;
}
.layer-tools .space {
    width: 4px;
}
.layer-tools button, .layers-foot button {
    width: 17px;
    height: 17px;
    border: 1px solid #e4e4e4;
}
.layer-tools svg, .layers-foot svg {
    width: 15px;
    height: 15px;
}
.layers .pressed {
    background: #d4d4d4;
}
.tree {
    height: 145px;
    padding: 2px;
    border: 1px solid #8b909c;
}
.root {
    display: flex;
    align-items: center;
    height: 19px;
}
.twisty {
    margin: 0 6px 0 3px;
    border-left: 5px solid transparent;
    border-bottom: 5px solid #333;
}
.root strong {
    padding: 3px;
    background: linear-gradient(90deg, #dadada, #fff 40px);
}
.layer {
    display: flex;
    align-items: flex-start;
    gap: 4px;
    margin-left: 27px;
    padding: 0 3px 1px 7px;
    height: 19px;
}
.selected {
    height: 46px;
    background: #9ab3d1;
}
.layer input {
    appearance: none;
    width: 11px;
    height: 11px;
    margin: 4px 0 0;
    border: 1px solid #444;
    background: #fff;
    display: grid;
    place-items: center;
}
.layer input::before {
    content: "";
    box-sizing: border-box;
    width: 5px;
    height: 8px;
    border: solid #111;
    border-width: 0 2px 2px 0;
    transform: rotate(40deg);
}
.layer input:disabled {
    border-color: #c4c4c4;
    background: #eee;
}
.layer input:disabled::before {
    border-color: #777;
}
.thumbs {
    width: 21px;
    display: grid;
    gap: 1px;
}
.thumbs svg {
    width: 21px;
    height: 14px;
    background: #fff;
}
.selected .thumbs {
    padding-top: 1px;
}
.layer label {
    flex: 1;
    margin-left: 2px;
    padding-top: 3px;
}
.layer > svg, .slot {
    width: 12px;
    height: 12px;
    margin-top: 3px;
}
.layers-foot {
    display: flex;
    align-items: center;
    gap: 6px;
    padding: 8px 2px 1px 10px;
}
.layers-foot p {
    flex: 1;
}

/* round keys at the window edge */
.float-keys {
    position: absolute;
    right: -7px;
    bottom: 30px;
    display: grid;
    gap: 3px;
}
.float-keys button {
    width: 13px;
    height: 13px;
    border: 1px solid #777;
    border-radius: 50%;
    background: #fff;
    font-weight: bold;
}

/* status bar */
.statusbar {
    flex: none;
    height: 8px;
    display: flex;
    background: #efefef;
    border-top: 1px solid #d9d9d9;
    overflow: hidden;
    white-space: nowrap;
}
.statusbar span {
    height: 12px;
    border-right: 1px solid #cfcfcf;
    padding-left: 2px;
}
.statusbar .zoom {
    width: 166px;
    padding-left: 0;
    text-indent: -3px;
}
.editing { width: 168px; }
.selecting { width: 167px; }
.c1 { width: 21px; }
.c2 { width: 27px; }
.c3 { width: 48px; }
.c4 { width: 48px; }
```
